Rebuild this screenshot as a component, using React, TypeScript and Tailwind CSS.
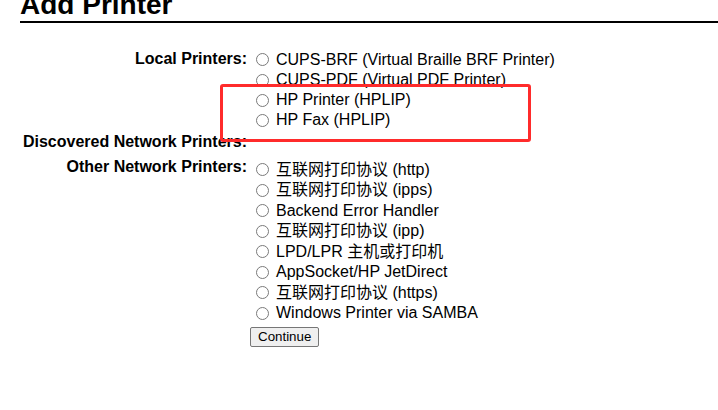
import React from "react";

const localPrinters = [
  "CUPS-BRF (Virtual Braille BRF Printer)",
  "CUPS-PDF (Virtual PDF Printer)",
  "HP Printer (HPLIP)",
  "HP Fax (HPLIP)",
];

const otherPrinters = [
  "互联网打印协议 (http)",
  "互联网打印协议 (ipps)",
  "Backend Error Handler",
  "互联网打印协议 (ipp)",
  "LPD/LPR 主机或打印机",
  "AppSocket/HP JetDirect",
  "互联网打印协议 (https)",
  "Windows Printer via SAMBA",
];

function RadioLine({ label, className }: { label: string; className: string }) {
  return (
    <label className={className}>
      <input
        type="radio"
        name="device"
        className="m-0 ml-[6px] mr-[7px] h-[13px] w-[13px] shrink-0 appearance-none rounded-full border border-[#7a7a7a] bg-white"
      />
      <span className="whitespace-nowrap">{label}</span>
    </label>
  );
}

export default function App() {
  return (
    <div className="relative h-[410px] w-[718px] overflow-hidden bg-white font-['Liberation_Sans','Noto_Sans_CJK_SC',sans-serif] text-[16px] text-black">
      <h1 className="ml-[20px] mt-[-11px] h-[34px] border-b-2 border-black text-[28px] font-bold leading-[32px]">
        Add Printer
      </h1>

      <form className="mt-[26.8px] flex flex-col">
        {/* Local */}
        <div className="flex">
          <div className="mt-[-1px] w-[247px] shrink-0 text-right font-bold leading-[20.2px]">Local Printers:</div>
          <div className="ml-[3px] flex flex-col">
            {localPrinters.map((p) => (
              <RadioLine key={p} label={p} className="flex h-[20.2px] items-center" />
            ))}
          </div>
        </div>

        {/* Discovered */}
        <div className="mt-[2.4px] flex">
          <div className="h-[18px] w-[247px] shrink-0 text-right font-bold leading-[18px] whitespace-nowrap">
            Discovered Network Printers:
          </div>
        </div>

        {/* Other */}
        <div className="mt-[8.4px] flex">
          <div className="mt-[-2px] w-[247px] shrink-0 text-right font-bold leading-[20.5px]">Other Network Printers:</div>
          <div className="ml-[3px] flex flex-col">
            {otherPrinters.map((p) => (
              <RadioLine key={p} label={p} className="flex h-[20.5px] items-center" />
            ))}
          </div>
        </div>

        <div className="mt-[3.3px] flex">
          <div className="w-[247px] shrink-0" />
          <button
            type="button"
            className="ml-[3px] h-[20.5px] rounded-[2px] border border-[#767676] bg-[#efefef] px-[7px] text-[13.33px] leading-[16px]"
          >
            Continue
          </button>
        </div>
      </form>

      {/* highlight box */}
      <div className="pointer-events-none absolute left-[220px] top-[84px] h-[58px] w-[311px] rounded-[3px] border-[3px] border-[#ff2b2b]" />
    </div>
  );
}
